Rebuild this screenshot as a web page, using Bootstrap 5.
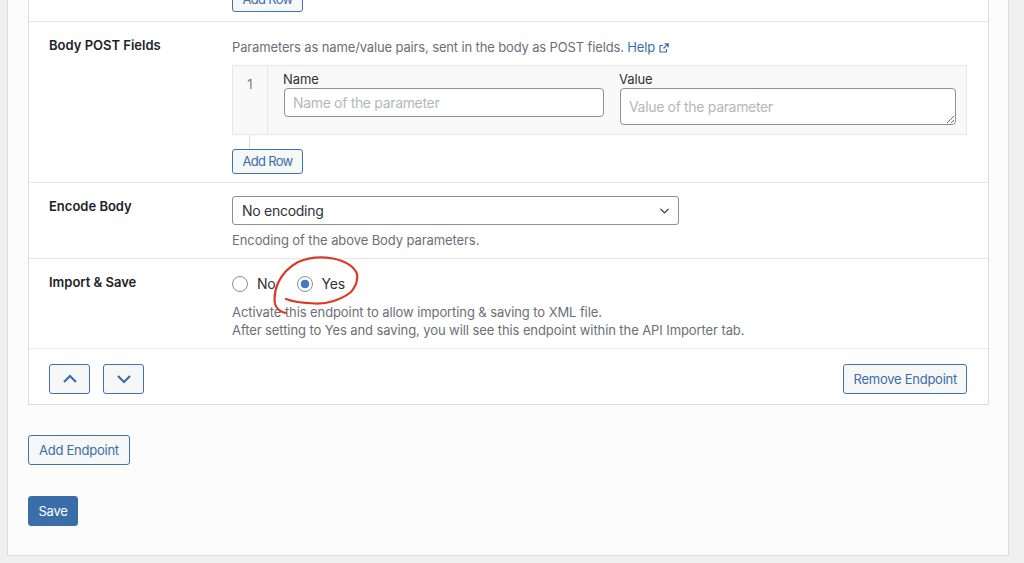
<!DOCTYPE html>
<html lang="en">
<head>
<meta charset="utf-8">
<title>Endpoint settings</title>
<link href="https://cdn.jsdelivr.net/npm/bootstrap@5.3.0/dist/css/bootstrap.min.css" rel="stylesheet">
<style>
html,body{height:563px;overflow:hidden}
body{background:#f0f0f1;font-family:Inter,"Liberation Sans",sans-serif;font-size:13px;color:#2c3338}
.wpanel{margin:0 15px 0 7px;height:556px;background:#fcfcfc;border:1px solid #dcdcde;border-top:0;padding:0 19px 0 20px}
.ecard{background:#fff;border:1px solid #dcdcde;border-top:0;height:405px}
.erow{display:flex;border-bottom:1px solid #e6e7e8;padding-left:20px;padding-right:21px}
.ehead{width:183px;flex:none;font-weight:600;color:#1d2327}
.ebody{flex:1;min-width:0}
.r0{height:22px;padding-left:203px;overflow:hidden}
.r1{height:161px;padding-top:14px}
.r2{height:76px;padding-top:13px}
.r3{height:90px;padding-top:14px}
.r2 .ehead{padding-top:1px}
.r4{height:56px;border-bottom:0;padding-top:15px;align-items:flex-start}
.wbtn{font-size:13px;line-height:23px;height:25px;padding:0 10px;color:#3a6ea8;background:#f6f7f7;border:1px solid #3f72af;border-radius:3px;display:inline-flex;align-items:center;justify-content:center;letter-spacing:-.25px}
.rowbtn{width:71px;padding:0;letter-spacing:-.7px}
.wbtn-top{margin-top:-13px;flex:none}
.hinttxt{color:#6b7075;line-height:18px;letter-spacing:-.09px}
.hintfirst{letter-spacing:-.14px;padding-top:2px}
.hinttxt a{color:#3a6ea8;text-decoration:none}
.repeat{display:flex;background:#f9f9f9;border:1px solid #e6e7e8;height:70px;width:735px;margin-top:9px}
.repnum{width:35px;flex:none;border-right:1px solid #e6e7e8;text-align:center;color:#787c82;padding-top:10px;line-height:16px}
.repfield{display:flex;gap:16px;padding:0 10px 0 16px;flex:1}
.repfield label{display:block;color:#2c3338;line-height:16px;margin-top:5px;margin-bottom:1px;margin-left:-1px;letter-spacing:-.1px}
.wfield{display:block;width:100%;border:1px solid #8c8f94;border-radius:4px;background:#fff;font-size:14px;padding:0 8px;color:#2c3338;letter-spacing:-.33px}
.wfield::placeholder{color:#b4b7ba;opacity:1}
.fname{width:320px;flex:none}
.fname .wfield{height:29px}
.fval{flex:1}
.fval .wfield{height:37px;padding-top:8px;line-height:20px;resize:vertical}
.tiestem{width:1px;height:14px;background:#dcdcde;margin-left:17px}
.wselect{width:447px;height:29px;font-size:14px;padding:0 8px 0 9px;border:1px solid #8c8f94;border-radius:3px;color:#2c3338;background-color:#fff;background-position:right 7px center;background-size:13px 10px;margin-bottom:6px;letter-spacing:-.27px}
.choice{display:flex;align-items:center;height:20px;margin-top:1px;margin-bottom:9px}
.choice label{display:flex;align-items:center;gap:9px;font-size:14px;line-height:20px;color:#2c3338;letter-spacing:-.2px}
.choice input{width:16px;height:16px;margin:0;border:1px solid #8c8f94;appearance:none;border-radius:50%;background:#fff;display:block}
.choice input:checked{background:radial-gradient(circle,#4478c2 0 4px,#fff 4.6px)}
.choice label+label{margin-left:21px}
.arrowbtn{width:41px;padding:0;height:30px}
.arrowbtn+.arrowbtn{margin-left:13px}
.rembtn{margin-left:auto;height:30px;line-height:28px;padding:0 9px}
.addend{height:30px;padding:0 10px;margin-top:30px}
.savebtn{width:50px;height:30px;padding:0;margin-top:31px;background:#3a6ea8;border-color:#3a6ea8;color:#fff}
.redmark{position:absolute;left:265px;top:250px;width:100px;height:65px;pointer-events:none}
</style>
</head>
<body>
<div class="wpanel">
  <div class="ecard">
    <div class="erow r0"><button class="wbtn rowbtn wbtn-top" type="button">Add Row</button></div>
    <div class="erow r1">
      <div class="ehead">Body POST Fields</div>
      <div class="ebody">
        <div class="hinttxt hintfirst">Parameters as name/value pairs, sent in the body as POST fields. <a href="#">Help <svg width="10" height="10" viewBox="0 0 10 10" fill="none" stroke="#3a6ea8" stroke-width="1.2"><path d="M7.5 6v3H1V2.500h3"/><path d="M5.500 .8h3.700v3.700M9 1 4.500 5.500"/></svg></a></div>
        <div class="repeat">
          <div class="repnum">1</div>
          <div class="repfield">
            <div class="fname"><label for="pn">Name</label><input id="pn" class="wfield" placeholder="Name of the parameter"></div>
            <div class="fval"><label for="pv">Value</label><textarea id="pv" class="wfield" placeholder="Value of the parameter"></textarea></div>
          </div>
        </div>
        <div class="tiestem"></div>
        <button class="wbtn rowbtn" type="button">Add Row</button>
      </div>
    </div>
    <div class="erow r2">
      <div class="ehead">Encode Body</div>
      <div class="ebody">
        <select class="form-select wselect" aria-label="Encode Body"><option>No encoding</option></select>
        <div class="hinttxt">Encoding of the above Body parameters.</div>
      </div>
    </div>
    <div class="erow r3">
      <div class="ehead">Import &amp; Save</div>
      <div class="ebody">
        <div class="choice"><label><input type="radio" name="imp">No</label><label><input type="radio" name="imp" checked>Yes</label></div>
        <div class="hinttxt">Activate this endpoint to allow importing &amp; saving to XML file.<br>After setting to Yes and saving, you will see this endpoint within the API Importer tab.</div>
      </div>
    </div>
    <div class="erow r4">
      <button class="wbtn arrowbtn" type="button" aria-label="Move up"><svg width="16" height="10" viewBox="0 0 16 10" fill="none" stroke="#3a6ea8" stroke-width="2.200"><path d="M2 8l6-6 6 6"/></svg></button>
      <button class="wbtn arrowbtn" type="button" aria-label="Move down"><svg width="16" height="10" viewBox="0 0 16 10" fill="none" stroke="#3a6ea8" stroke-width="2.200"><path d="M2 2l6 6 6-6"/></svg></button>
      <button class="wbtn rembtn" type="button">Remove Endpoint</button>
    </div>
  </div>
  <div><button class="wbtn addend" type="button">Add Endpoint</button></div>
  <div><button class="wbtn savebtn" type="button">Save</button></div>
</div>
<svg class="redmark" viewBox="0 0 100 65" fill="none" stroke="#dc3a26" stroke-width="2.200" stroke-linecap="round"><path d="M21 49C28 52 38 53 50 53.500C62 54 76 50 86 42C91 36 93 30 92 24C89 16 80 11 68 8.500C54 6 42 8 33 12C24 17 17 24 13 33C10 40 9 48 10 54C12 60 16 62 21 63"/></svg>
</body>
</html>
